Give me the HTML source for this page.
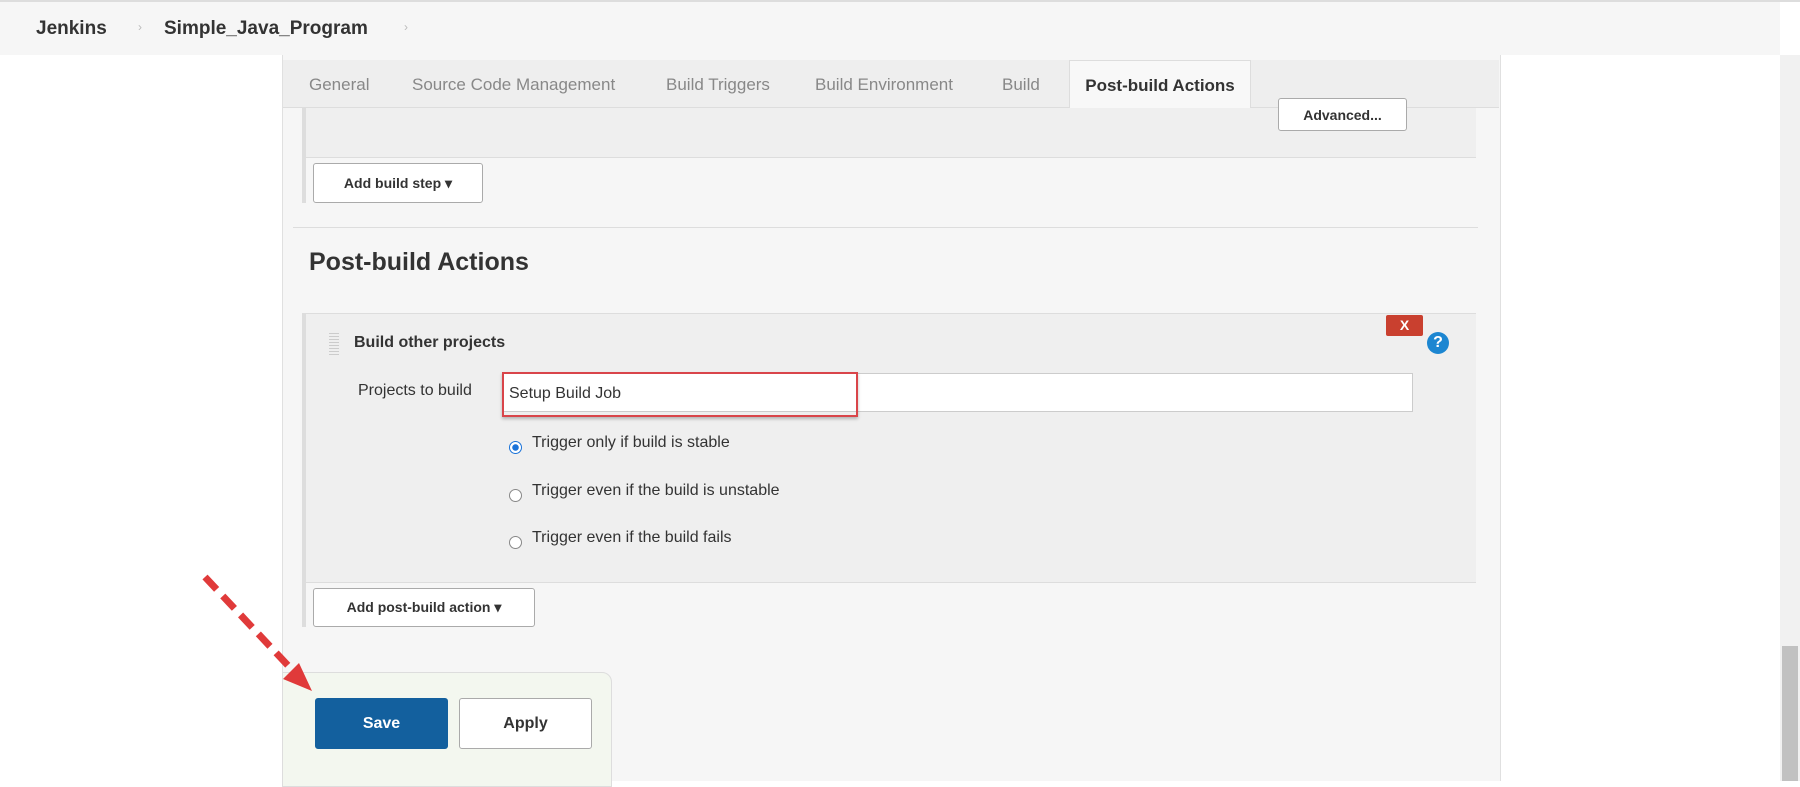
<!DOCTYPE html><html><head><style>
body{margin:0;width:1800px;height:781px;overflow:hidden;background:#fff;font-family:"Liberation Sans",sans-serif;position:relative;color:#333}
.a{position:absolute}
.btn{position:absolute;background:#fff;border:1px solid #aaa;border-radius:3px;font-weight:bold;font-size:15px;color:#333;display:flex;align-items:center;justify-content:center;box-sizing:border-box}
.tab{position:absolute;top:75px;font-size:17px;color:#888}
.radio{position:absolute;width:13px;height:13px;border:1px solid #888;border-radius:50%;box-sizing:border-box;background:#fff}
.rt{position:absolute;font-size:16px;color:#333}
</style></head><body>
<div class="a" style="left:0;top:0;width:1800px;height:2px;background:#ddd"></div>
<div class="a" style="left:0;top:2px;width:1780px;height:53px;background:#f6f6f6"></div>
<div class="a" style="left:36px;top:18px;font-size:19px;font-weight:bold;color:#333">Jenkins</div>
<div class="a" style="left:138px;top:20px;font-size:12px;color:#bbb">›</div>
<div class="a" style="left:164px;top:18px;font-size:19px;font-weight:bold;color:#333">Simple_Java_Program</div>
<div class="a" style="left:404px;top:20px;font-size:12px;color:#bbb">›</div>
<div class="a" style="left:1780px;top:55px;width:20px;height:726px;background:#f1f1f1"></div>
<div class="a" style="left:1782px;top:646px;width:16px;height:135px;background:#c1c1c1"></div>
<div class="a" style="left:282px;top:55px;width:1217px;height:726px;background:#f6f6f6;border-left:1px solid #e0e0e0;border-right:1px solid #e0e0e0"></div>
<div class="a" style="left:283px;top:60px;width:1216px;height:47px;background:#eee;border-bottom:1px solid #ddd"></div>
<div class="tab" style="left:309px">General</div>
<div class="tab" style="left:412px">Source Code Management</div>
<div class="tab" style="left:666px">Build Triggers</div>
<div class="tab" style="left:815px">Build Environment</div>
<div class="tab" style="left:1002px">Build</div>
<div class="a" style="left:1069px;top:60px;width:182px;height:48px;background:#f8f8f8;border:1px solid #ddd;border-bottom:none;box-sizing:border-box;font-size:17px;font-weight:bold;color:#333;text-align:center;line-height:50px">Post-build Actions</div>
<div class="a" style="left:302px;top:108px;width:1174px;height:50px;background:#efefef;border-left:4px solid #ddd;border-bottom:1px solid #ddd;box-sizing:border-box"></div>
<div class="a" style="left:302px;top:158px;width:4px;height:45px;background:#ddd"></div>
<div class="btn" style="left:1278px;top:98px;width:129px;height:33px;font-size:14px">Advanced...</div>
<div class="btn" style="left:313px;top:163px;width:170px;height:40px;font-size:14px">Add build step ▾</div>
<div class="a" style="left:293px;top:227px;width:1185px;height:1px;background:#ddd"></div>
<div class="a" style="left:309px;top:248px;font-size:25px;font-weight:bold;color:#333">Post-build Actions</div>
<div class="a" style="left:302px;top:313px;width:1174px;height:270px;background:#efefef;border-left:4px solid #ddd;border-top:1px solid #ddd;border-bottom:1px solid #ddd;box-sizing:border-box"></div>
<div class="a" style="left:302px;top:583px;width:4px;height:44px;background:#ddd"></div>
<div class="a" style="left:329px;top:331px;width:10px;height:24px;background:repeating-linear-gradient(0deg,#ccc 0 1px,transparent 1px 3px)"></div>
<div class="a" style="left:354px;top:334px;font-size:16px;font-weight:bold;color:#333">Build other projects</div>
<div class="a" style="left:1386px;top:315px;width:37px;height:21px;background:#c9402f;border-radius:2px;color:#fff;font-size:14px;font-weight:bold;text-align:center;line-height:21px">X</div>
<div class="a" style="left:1427px;top:332px;width:22px;height:22px;border-radius:50%;background:#1c86d1;color:#fff;font-size:16px;font-weight:bold;text-align:center;line-height:22px">?</div>
<div class="a" style="left:358px;top:382px;font-size:16px;color:#333">Projects to build</div>
<div class="a" style="left:502px;top:373px;width:911px;height:39px;background:#fff;border:1px solid #ccc;box-sizing:border-box"></div>
<div class="a" style="left:502px;top:372px;width:356px;height:45px;border:2px solid #d9454a;box-sizing:border-box;box-shadow:0 2px 3px rgba(0,0,0,.25)"></div>
<div class="a" style="left:509px;top:385px;font-size:16px;color:#333">Setup Build Job</div>
<div class="radio" style="left:509px;top:441px;border-color:#1a73d9;background:radial-gradient(#1a73d9 0 3px,#fff 3.5px)"></div>
<div class="rt" style="left:532px;top:434px">Trigger only if build is stable</div>
<div class="radio" style="left:509px;top:489px"></div>
<div class="rt" style="left:532px;top:482px">Trigger even if the build is unstable</div>
<div class="radio" style="left:509px;top:536px"></div>
<div class="rt" style="left:532px;top:529px">Trigger even if the build fails</div>
<div class="btn" style="left:313px;top:588px;width:222px;height:39px;font-size:14px">Add post-build action ▾</div>
<div class="a" style="left:282px;top:672px;width:330px;height:115px;background:#f3f7ef;border:1px solid #ddd;border-radius:0 10px 0 0;box-sizing:border-box"></div>
<div class="btn" style="left:315px;top:698px;width:133px;height:51px;background:#13609e;border-color:#13609e;color:#fff;font-size:16px">Save</div>
<div class="btn" style="left:459px;top:698px;width:133px;height:51px;font-size:16px">Apply</div>
<svg class="a" style="left:195px;top:565px" width="125" height="135"><line x1="10" y1="12" x2="100" y2="108" stroke="#e03a3a" stroke-width="7" stroke-dasharray="17 9"/><polygon points="117,126 88,114 104,98" fill="#e03a3a"/></svg>
</body></html>
